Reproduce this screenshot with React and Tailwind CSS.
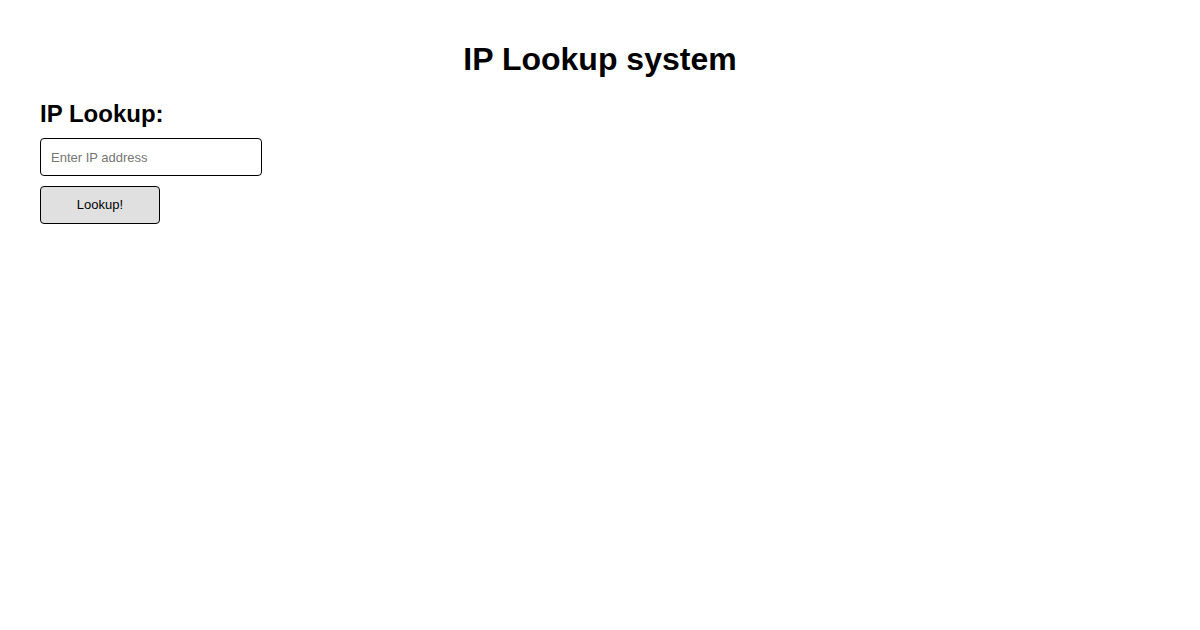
export default function App() {
  return (
    <div className="min-h-screen bg-white px-10 pt-[39px] text-black font-['Liberation_Sans',Arial,sans-serif]">
      <h1 className="text-center text-[32px] font-bold leading-[40px]">IP Lookup system</h1>
      <h2 className="mt-[21px] text-2xl font-bold leading-7">IP Lookup:</h2>
      <form className="mt-[10px] flex flex-col items-start gap-[10px]" onSubmit={(e) => e.preventDefault()}>
        <input
          type="text"
          placeholder="Enter IP address"
          className="h-[38px] w-[222px] rounded border border-black px-[10px] text-[13px] placeholder:text-[#757575] outline-none"
        />
        <button
          type="submit"
          className="h-[38px] w-[120px] rounded border border-black bg-[#e0e0e0] text-[13px]"
        >
          Lookup!
        </button>
      </form>
    </div>
  );
}
